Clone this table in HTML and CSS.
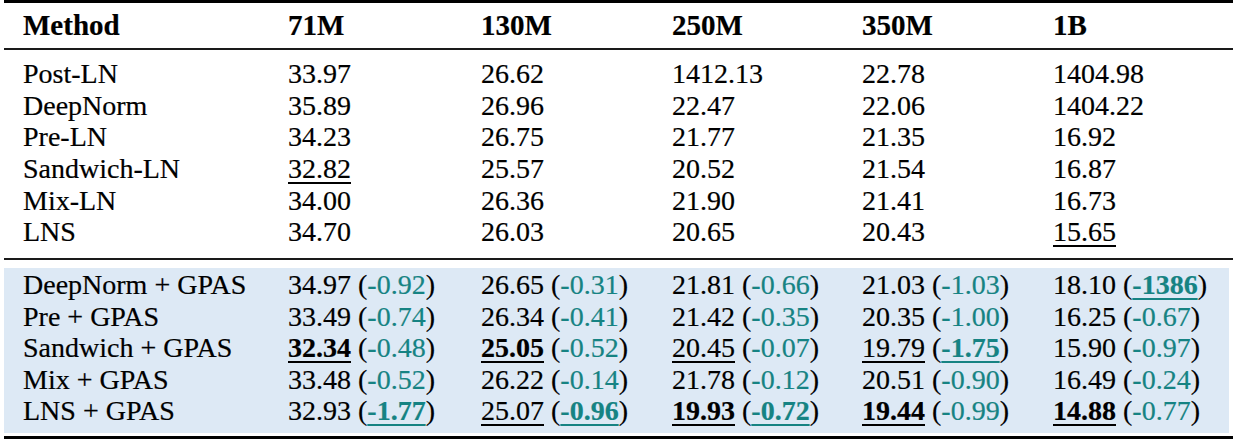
FILE: index.html
```html
<!DOCTYPE html>
<html lang="en">
<head>
	<meta charset="UTF-8">
	<title>Results</title>
	<link rel="stylesheet" href="styles.css">
</head>
<body>
	<div class="table">
		<div class="rule thick"></div>
		<div class="row head">
			<div>Method</div><div>71M</div><div>130M</div><div>250M</div><div>350M</div><div>1B</div>
		</div>
		<div class="rule"></div>

		<div class="group base">
			<div class="row"><div>Post-LN</div><div>33.97</div><div>26.62</div><div>1412.13</div><div>22.78</div><div>1404.98</div></div>
			<div class="row"><div>DeepNorm</div><div>35.89</div><div>26.96</div><div>22.47</div><div>22.06</div><div>1404.22</div></div>
			<div class="row"><div>Pre-LN</div><div>34.23</div><div>26.75</div><div>21.77</div><div>21.35</div><div>16.92</div></div>
			<div class="row"><div>Sandwich-LN</div><div><u>32.82</u></div><div>25.57</div><div>20.52</div><div>21.54</div><div>16.87</div></div>
			<div class="row"><div>Mix-LN</div><div>34.00</div><div>26.36</div><div>21.90</div><div>21.41</div><div>16.73</div></div>
			<div class="row"><div>LNS</div><div>34.70</div><div>26.03</div><div>20.65</div><div>20.43</div><div><u>15.65</u></div></div>
		</div>
		<div class="rule"></div>

		<div class="group shaded">
			<div class="row">
				<div>DeepNorm<span class="op">+</span>GPAS</div>
				<div>34.97 (<span class="d">-0.92</span>)</div>
				<div>26.65 (<span class="d">-0.31</span>)</div>
				<div>21.81 (<span class="d">-0.66</span>)</div>
				<div>21.03 (<span class="d">-1.03</span>)</div>
				<div>18.10 (<u class="d best">-1386</u>)</div>
			</div>
			<div class="row">
				<div>Pre<span class="op">+</span>GPAS</div>
				<div>33.49 (<span class="d">-0.74</span>)</div>
				<div>26.34 (<span class="d">-0.41</span>)</div>
				<div>21.42 (<span class="d">-0.35</span>)</div>
				<div>20.35 (<span class="d">-1.00</span>)</div>
				<div>16.25 (<span class="d">-0.67</span>)</div>
			</div>
			<div class="row">
				<div>Sandwich<span class="op">+</span>GPAS</div>
				<div><u class="best">32.34</u> (<span class="d">-0.48</span>)</div>
				<div><u class="best">25.05</u> (<span class="d">-0.52</span>)</div>
				<div><u>20.45</u> (<span class="d">-0.07</span>)</div>
				<div><u>19.79</u> (<u class="d best">-1.75</u>)</div>
				<div>15.90 (<span class="d">-0.97</span>)</div>
			</div>
			<div class="row">
				<div>Mix<span class="op">+</span>GPAS</div>
				<div>33.48 (<span class="d">-0.52</span>)</div>
				<div>26.22 (<span class="d">-0.14</span>)</div>
				<div>21.78 (<span class="d">-0.12</span>)</div>
				<div>20.51 (<span class="d">-0.90</span>)</div>
				<div>16.49 (<span class="d">-0.24</span>)</div>
			</div>
			<div class="row">
				<div>LNS<span class="op">+</span>GPAS</div>
				<div>32.93 (<u class="d best">-1.77</u>)</div>
				<div><u>25.07</u> (<u class="d best">-0.96</u>)</div>
				<div><u class="best">19.93</u> (<u class="d best">-0.72</u>)</div>
				<div><u class="best">19.44</u> (<span class="d">-0.99</span>)</div>
				<div><u class="best">14.88</u> (<span class="d">-0.77</span>)</div>
			</div>
		</div>
		<div class="rule thick bottom"></div>
	</div>
</body>
</html>
```

FILE: styles.css
```css
*{
	margin: 0;
	padding: 0;
	box-sizing: border-box;
}
body{
	background: #fff;
	color: #000;
	font-family: "Liberation Serif", "Times New Roman", serif;
	font-size: 28px;
	-webkit-text-stroke: 0.2px currentColor;
}
.table{
	width: 1229px;
	margin-left: 4px;
}
.rule{
	height: 2px;
	background: #1a1a1a;
}
.rule.thick{
	height: 3px;
	background: #000;
}
.rule.bottom{
	margin-top: 3px;
}
.row{
	display: grid;
	grid-template-columns: 284px 193px 191px 190px 191px 1fr;
	height: 31.6px;
	line-height: 31.6px;
	white-space: nowrap;
}
.row > div:first-child{
	padding-left: 19px;
}
.row.head{
	height: 45px;
	line-height: 45px;
	font-size: 29px;
	font-weight: bold;
}
.group.base{
	padding: 8.2px 0 10.2px;
}
.group.shaded{
	margin: 8px 4px 0 0;
	padding: 1px 0 6px;
	background: #dde9f5;
}
.op{
	margin: 0 7px;
}
.d{
	color: #168383;
}
u{
	text-decoration-thickness: 1.5px;
	text-underline-offset: 4px;
}
.best{
	font-weight: bold;
}
```
